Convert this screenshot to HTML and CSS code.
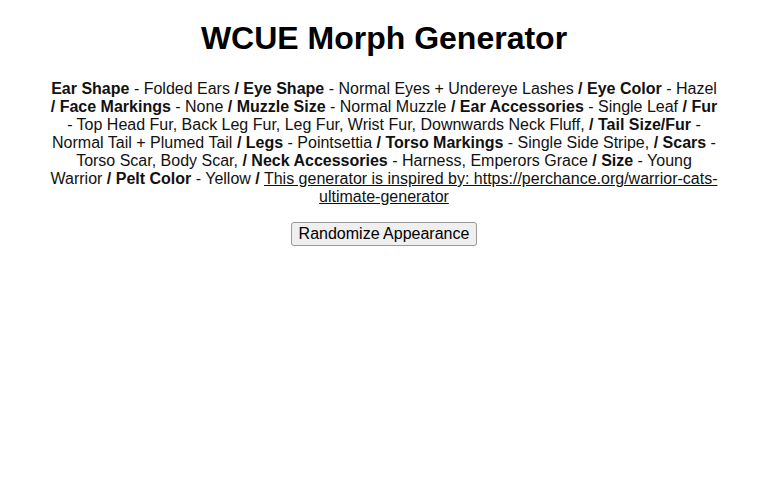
FILE: index.html
```html
<!DOCTYPE html>
<html>
<head>
<meta charset="utf-8">
<link rel="stylesheet" href="styles.css">
</head>
<body>
<div class="page">
<h1 class="title">WCUE Morph Generator</h1>
<p class="result"><b>Ear Shape</b> - Folded Ears <b>/</b> <b>Eye Shape</b> - Normal Eyes + Undereye Lashes <b>/</b> <b>Eye Color</b> - Hazel <b>/</b> <b>Face Markings</b> - None <b>/</b> <b>Muzzle Size</b> - Normal Muzzle <b>/</b> <b>Ear Accessories</b> - Single Leaf <b>/</b> <b>Fur</b> - Top Head Fur, Back Leg Fur, Leg Fur, Wrist Fur, Downwards Neck Fluff, <b>/</b> <b>Tail Size/Fur</b> - Normal Tail + Plumed Tail <b>/</b> <b>Legs</b> - Pointsettia <b>/</b> <b>Torso Markings</b> - Single Side Stripe, <b>/</b> <b>Scars</b> - Torso Scar, Body Scar, <b>/</b> <b>Neck Accessories</b> - Harness, Emperors Grace <b>/</b> <b>Size</b> - Young Warrior <b>/</b> <b>Pelt Color</b> - Yellow <b>/</b> <a class="link" href="#">This generator is inspired by: https://perchance.org/warrior-cats-ultimate-generator</a></p>
<div class="actions"><button class="btn">Randomize Appearance</button></div>
</div>
</body>
</html>
```
FILE: styles.css
```css
html, body {
  margin: 0;
  padding: 0;
  background: #fff;
}
body {
  font-family: "Liberation Sans", Arial, sans-serif;
  color: #111;
}
.page {
  width: 670px;
  margin: 0 auto;
  text-align: center;
}
.title {
  font-size: 32px;
  font-weight: bold;
  margin: 0;
  padding-top: 20px;
  line-height: 37px;
  color: #000;
}
.result {
  font-size: 16px;
  line-height: 18px;
  margin: 23px 0 0;
}
.result b {
  font-weight: bold;
}
.link {
  color: inherit;
  text-decoration: underline;
}
.actions {
  margin-top: 16px;
}
.btn {
  font-family: "Liberation Sans", Arial, sans-serif;
  font-size: 16px;
  color: #000;
  background: #efefef;
  border: 1px solid #999;
  border-radius: 3px;
  padding: 2px 7px;
}
```
